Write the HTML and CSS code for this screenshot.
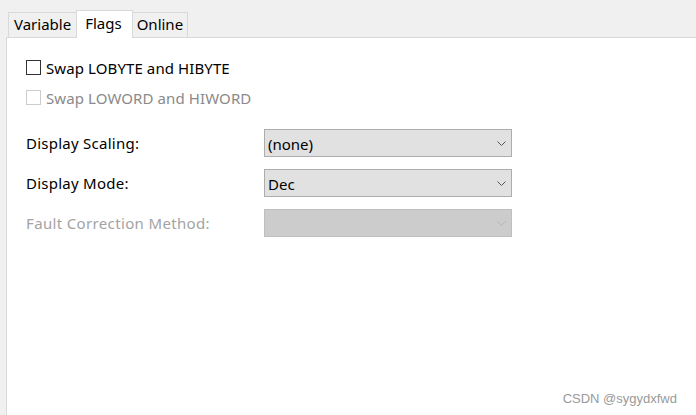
FILE: index.html
```html
<!DOCTYPE html>
<html>
<head>
<meta charset="utf-8">
<link rel="stylesheet" href="styles.css">
</head>
<body>
<div class="window">
  <div class="tabs">
    <div class="tab tab-variable">Variable</div>
    <div class="tab tab-active">Flags</div>
    <div class="tab tab-online">Online</div>
  </div>
  <div class="panel">
    <div class="checks">
      <div class="check-row">
        <span class="box"></span>
        <span class="check-label">Swap LOBYTE and HIBYTE</span>
      </div>
      <div class="check-row disabled">
        <span class="box"></span>
        <span class="check-label">Swap LOWORD and HIWORD</span>
      </div>
    </div>
    <div class="form">
      <div class="label">Display Scaling:</div>
      <div class="combo">
        <span class="combo-text">(none)</span>
        <svg class="chev" width="9" height="5" viewBox="0 0 9 5"><path d="M0.5 0.5 L4.5 4.5 L8.5 0.5" fill="none" stroke="currentColor" stroke-width="1"/></svg>
      </div>
      <div class="label">Display Mode:</div>
      <div class="combo">
        <span class="combo-text">Dec</span>
        <svg class="chev" width="9" height="5" viewBox="0 0 9 5"><path d="M0.5 0.5 L4.5 4.5 L8.5 0.5" fill="none" stroke="currentColor" stroke-width="1"/></svg>
      </div>
      <div class="label label-disabled">Fault Correction Method:</div>
      <div class="combo combo-disabled">
        <span class="combo-text"></span>
        <svg class="chev" width="9" height="5" viewBox="0 0 9 5"><path d="M0.5 0.5 L4.5 4.5 L8.5 0.5" fill="none" stroke="currentColor" stroke-width="1"/></svg>
      </div>
    </div>
    <div class="watermark">CSDN @sygydxfwd</div>
  </div>
</div>
</body>
</html>
```
FILE: styles.css
```css
html, body {
  margin: 0;
  padding: 0;
  height: 100%;
}
body {
  background: #f0f0f0;
  font-family: "Noto Sans", "Open Sans", sans-serif;
  font-size: 15px;
  line-height: 20px;
  color: #000;
  overflow: hidden;
}
.window {
  display: flex;
  flex-direction: column;
  height: 415px;
}
.tabs {
  display: flex;
  align-items: flex-end;
  height: 37px;
  padding-left: 8px;
  flex: none;
}
.tab {
  border: 1px solid #d9d9d9;
  border-bottom: none;
  background: #f0f0f0;
  padding: 1px 5px 3px 5px;
}
.tab-variable {
  padding: 1px 5px 3px 5px;
}
.tab-active {
  position: relative;
  z-index: 1;
  background: #fff;
  margin-left: -1px;
  margin-bottom: -1px;
  padding: 2px 10px 5px 8px;
}
.tab-online {
  margin-left: -1px;
  padding: 1px 4px 3px 4px;
}
.panel {
  position: relative;
  flex: 1;
  margin-left: 6px;
  background: #fff;
  border-top: 1px solid #d9d9d9;
  border-left: 1px solid #d9d9d9;
  padding: 20px 0 0 19px;
}
.checks {
  display: flex;
  flex-direction: column;
  gap: 11px;
}
.check-row {
  display: flex;
  align-items: center;
  height: 19px;
  gap: 5px;
}
.check-label {
  letter-spacing: 0.1px;
}
.box {
  width: 15px;
  height: 15px;
  box-sizing: border-box;
  border: 1px solid #333;
  background: #fff;
}
.check-row.disabled .box {
  border-color: #cccccc;
}
.check-row.disabled .check-label {
  color: #8a8a8a;
}
.form {
  margin-top: 22px;
  display: grid;
  grid-template-columns: 238px 248px;
  grid-auto-rows: 28px;
  row-gap: 12px;
  align-items: center;
}
.label {
  letter-spacing: 0.25px;
}
.label-disabled {
  color: #a3a3a3;
  letter-spacing: 0.35px;
}
.combo {
  height: 28px;
  box-sizing: border-box;
  border: 1px solid #adadad;
  background: #e1e1e1;
  display: flex;
  align-items: center;
  justify-content: space-between;
  padding: 1px 5px 0 3px;
  color: #555;
}
.combo-text {
  color: #000;
}
.combo-disabled {
  background: #cccccc;
  border-color: #bfbfbf;
  color: #b5b5b5;
}
.chev {
  display: block;
}
.watermark {
  position: absolute;
  right: 19px;
  bottom: 9px;
  font-family: "Liberation Sans", Arial, sans-serif;
  font-size: 13px;
  line-height: 15px;
  color: #9a9a9a;
}
```
